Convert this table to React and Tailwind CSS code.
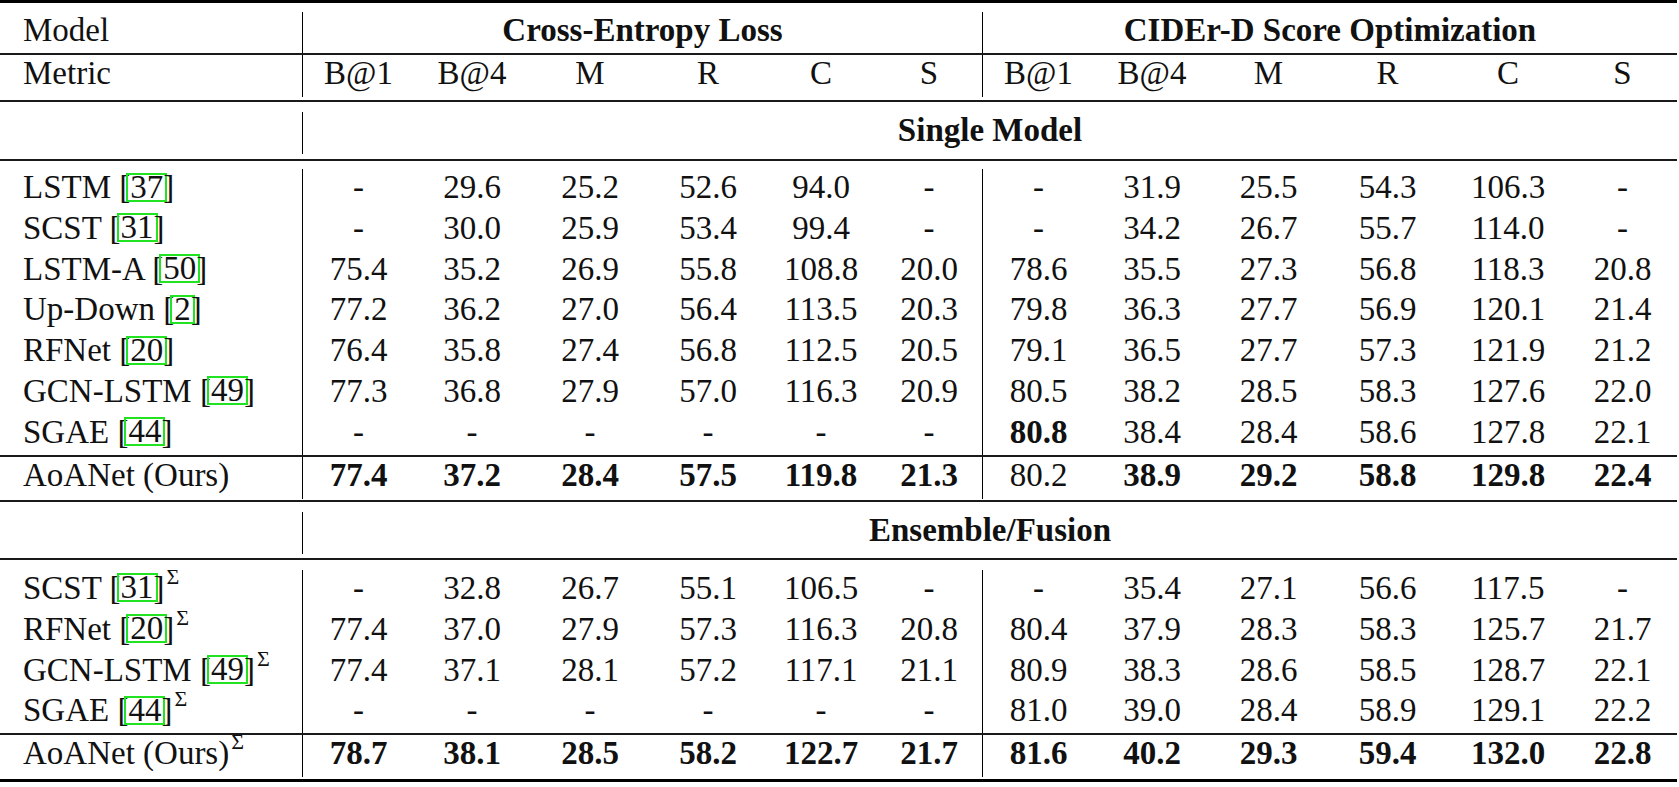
const COLS = 'grid grid-cols-[302px_112px_116px_120px_116px_110px_106px_112px_116px_117px_121px_120px_109px]';

const METRICS = ['B@1', 'B@4', 'M', 'R', 'C', 'S'];

// '*' prefix marks a bold value
const single = [
  { name: 'LSTM', cite: '37', vals: ['-', '29.6', '25.2', '52.6', '94.0', '-', '-', '31.9', '25.5', '54.3', '106.3', '-'] },
  { name: 'SCST', cite: '31', vals: ['-', '30.0', '25.9', '53.4', '99.4', '-', '-', '34.2', '26.7', '55.7', '114.0', '-'] },
  { name: 'LSTM-A', cite: '50', vals: ['75.4', '35.2', '26.9', '55.8', '108.8', '20.0', '78.6', '35.5', '27.3', '56.8', '118.3', '20.8'] },
  { name: 'Up-Down', cite: '2', vals: ['77.2', '36.2', '27.0', '56.4', '113.5', '20.3', '79.8', '36.3', '27.7', '56.9', '120.1', '21.4'] },
  { name: 'RFNet', cite: '20', vals: ['76.4', '35.8', '27.4', '56.8', '112.5', '20.5', '79.1', '36.5', '27.7', '57.3', '121.9', '21.2'] },
  { name: 'GCN-LSTM', cite: '49', vals: ['77.3', '36.8', '27.9', '57.0', '116.3', '20.9', '80.5', '38.2', '28.5', '58.3', '127.6', '22.0'] },
  { name: 'SGAE', cite: '44', vals: ['-', '-', '-', '-', '-', '-', '*80.8', '38.4', '28.4', '58.6', '127.8', '22.1'] },
];
const singleOurs = { name: 'AoANet (Ours)', vals: ['*77.4', '*37.2', '*28.4', '*57.5', '*119.8', '*21.3', '80.2', '*38.9', '*29.2', '*58.8', '*129.8', '*22.4'] };

const ensemble = [
  { name: 'SCST', cite: '31', sigma: true, vals: ['-', '32.8', '26.7', '55.1', '106.5', '-', '-', '35.4', '27.1', '56.6', '117.5', '-'] },
  { name: 'RFNet', cite: '20', sigma: true, vals: ['77.4', '37.0', '27.9', '57.3', '116.3', '20.8', '80.4', '37.9', '28.3', '58.3', '125.7', '21.7'] },
  { name: 'GCN-LSTM', cite: '49', sigma: true, vals: ['77.4', '37.1', '28.1', '57.2', '117.1', '21.1', '80.9', '38.3', '28.6', '58.5', '128.7', '22.1'] },
  { name: 'SGAE', cite: '44', sigma: true, vals: ['-', '-', '-', '-', '-', '-', '81.0', '39.0', '28.4', '58.9', '129.1', '22.2'] },
];
const ensembleOurs = { name: 'AoANet (Ours)', sigma: true, vals: ['*78.7', '*38.1', '*28.5', '*58.2', '*122.7', '*21.7', '*81.6', '*40.2', '*29.3', '*59.4', '*132.0', '*22.8'] };

function Cite({ n }) {
  return (
    <>
      [<span className="inline-block border-[2.5px] border-[#22e322] px-[2px] mx-[-4px] leading-[25px]">{n}</span>]
    </>
  );
}

function Rule({ thick }) {
  return <div className={thick ? 'h-[3px] bg-black' : 'h-[2px] bg-[#1a1a1a]'} />;
}

function Gap({ h }) {
  return <div className={h} />;
}

function DataRow({ row }) {
  return (
    <div className={`${COLS} h-[40.8px]`}>
      <div className="flex items-center pl-[23px] pb-[6px] whitespace-nowrap">
        {row.name}
        {row.cite && (
          <>
            {' '}
            <Cite n={row.cite} />
          </>
        )}
        {row.sigma && <sup className="text-[22px] ml-[2px]">Σ</sup>}
      </div>
      {row.vals.map((v, i) => {
        const bold = v.startsWith('*');
        return (
          <div
            key={i}
            className={`flex items-center justify-center pb-[6px] whitespace-nowrap ${i === 0 || i === 6 ? 'border-l border-black' : ''} ${bold ? 'font-bold' : ''}`}
          >
            {bold ? v.slice(1) : v}
          </div>
        );
      })}
    </div>
  );
}

function SectionRow({ title }) {
  return (
    <div className={`${COLS} h-[41px]`}>
      <div />
      <div className="col-span-12 border-l border-black flex items-center justify-center pb-[6px] font-bold">
        {title}
      </div>
    </div>
  );
}

export default function App() {
  return (
    <div className="w-[1679px] h-[787px] bg-white text-[#111] text-[33px] leading-[36px] font-['Liberation_Serif','Times_New_Roman',serif]">
      <div className="w-[1677px] flex flex-col">
        <Rule thick />
        <Gap h="h-[9px]" />

        {/* header */}
        <div className={`${COLS} h-[41px]`}>
          <div className="flex items-center pl-[23px] pb-[6px]">Model</div>
          <div className="col-span-6 border-l border-black flex items-center justify-center pb-[6px] font-bold">
            Cross-Entropy Loss
          </div>
          <div className="col-span-6 border-l border-black flex items-center justify-center pb-[6px] font-bold">
            CIDEr-D Score Optimization
          </div>
        </div>
        <Rule />
        <div className={`${COLS} h-[41px]`}>
          <div className="flex items-center pl-[23px] pb-[6px]">Metric</div>
          {[...METRICS, ...METRICS].map((m, i) => (
            <div
              key={i}
              className={`flex items-center justify-center pb-[6px] ${i === 0 || i === 6 ? 'border-l border-black' : ''}`}
            >
              {m}
            </div>
          ))}
        </div>
        <Gap h="h-[4px]" />
        <Rule />

        {/* single model */}
        <Gap h="h-[10px]" />
        <SectionRow title="Single Model" />
        <Gap h="h-[6px]" />
        <Rule />
        <Gap h="h-[8px]" />
        {single.map((r) => (
          <DataRow key={r.name} row={r} />
        ))}
        <Rule />
        <DataRow row={singleOurs} />
        <Gap h="h-[2.6px]" />
        <Rule />

        {/* ensemble */}
        <Gap h="h-[10px]" />
        <SectionRow title="Ensemble/Fusion" />
        <Gap h="h-[5px]" />
        <Rule />
        <Gap h="h-[10px]" />
        {ensemble.map((r) => (
          <DataRow key={r.name} row={r} />
        ))}
        <Rule />
        <DataRow row={ensembleOurs} />
        <Gap h="h-[3px]" />
        <Rule thick />
      </div>
    </div>
  );
}
